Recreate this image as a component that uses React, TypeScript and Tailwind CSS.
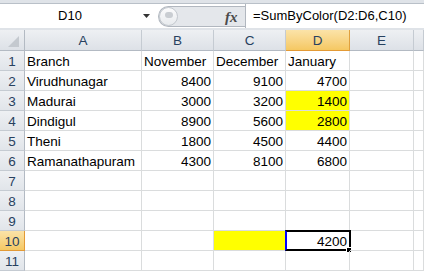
import React from "react"

const COLS = ["A", "B", "C", "D", "E", ""]

type Cell = { v?: string; num?: boolean; fill?: boolean; sel?: boolean }

const ROWS: Cell[][] = [
  [{ v: "Branch" }, { v: "November" }, { v: "December" }, { v: "January" }, {}, {}],
  [{ v: "Virudhunagar" }, { v: "8400", num: true }, { v: "9100", num: true }, { v: "4700", num: true }, {}, {}],
  [{ v: "Madurai" }, { v: "3000", num: true }, { v: "3200", num: true }, { v: "1400", num: true, fill: true }, {}, {}],
  [{ v: "Dindigul" }, { v: "8900", num: true }, { v: "5600", num: true }, { v: "2800", num: true, fill: true }, {}, {}],
  [{ v: "Theni" }, { v: "1800", num: true }, { v: "4500", num: true }, { v: "4400", num: true }, {}, {}],
  [{ v: "Ramanathapuram" }, { v: "4300", num: true }, { v: "8100", num: true }, { v: "6800", num: true }, {}, {}],
  [{}, {}, {}, {}, {}, {}],
  [{}, {}, {}, {}, {}, {}],
  [{}, {}, {}, {}, {}, {}],
  [{}, {}, { fill: true }, { v: "4200", num: true, sel: true }, {}, {}],
  [{}, {}, {}, {}, {}, {}],
]

const font = { fontFamily: '"Liberation Sans", Arial, sans-serif' }

export default function App() {
  return (
    <div className="w-[424px] h-[271px] overflow-hidden bg-white" style={font}>
      {/* top strip */}
      <div className="h-[4px] bg-[#dfe3e8] border-b border-[#b9c0c8]" />

      {/* formula bar */}
      <div className="h-[24px] flex items-stretch bg-white">
        <div className="w-[158px] flex items-center bg-white">
          <div className="w-[140px] text-center text-[13px] leading-[24px] text-black">D10</div>
          <svg width="8" height="5" viewBox="0 0 8 5" className="ml-[3px]">
            <path d="M0 0 L7 0 L3.5 4 Z" fill="#333" />
          </svg>
        </div>
        <div className="w-[87px] flex items-center">
          <div className="relative h-[21px] w-full rounded-l-full border border-r-0 border-[#b1b7bf] bg-[#e4e7eb] flex items-center">
            <div className="ml-[0px] w-[19px] h-[19px] rounded-full border border-[#c3c8ce] bg-gradient-to-b from-[#fbfbfc] to-[#e8ebee] flex justify-center">
              <div className="mt-[4px] w-[8px] h-[6px] rounded-full bg-[#c9cdd2]" />
            </div>
            <span
              className="absolute left-[66px] top-[1px] text-[15px] leading-[18px] italic font-bold text-[#4b4b4b]"
              style={{ fontFamily: '"Liberation Serif", "Times New Roman", serif' }}
            >
              fx
            </span>
          </div>
        </div>
        <div className="flex-1 border-l border-[#b1b7bf] pl-[7px] text-[13px] leading-[24px] text-black whitespace-nowrap">
          =SumByColor(D2:D6,C10)
        </div>
      </div>
      <div className="h-[2px] bg-[#dfe3e8]" />

      {/* grid */}
      <div className="grid grid-cols-[25px_117px_72px_72px_64px_64px_1fr]">
        {/* header row */}
        <div className="h-[21px] border-r border-b border-[#b3bac3] bg-gradient-to-b from-[#eef0f3] to-[#dde1e7] relative">
          <svg width="12" height="11" viewBox="0 0 12 11" className="absolute right-[4px] bottom-[3px]">
            <path d="M11 0 L11 11 L0 11 Z" fill="#c4c9cf" />
          </svg>
        </div>
        {COLS.map((c, i) => {
          const on = c === "D"
          return (
            <div
              key={i}
              className={`h-[21px] border-b text-center text-[13.5px] leading-[18px] pt-[2px] text-[#27415f] ${
                on
                  ? "bg-gradient-to-b from-[#fbe3a8] to-[#f5c862] border-r border-r-[#e0a03d] border-b-[#e39a36]"
                  : "bg-gradient-to-b from-[#eef0f3] to-[#dde1e7] border-r border-[#c5cbd2] border-b-[#b3bac3]"
              }`}
            >
              {c}
            </div>
          )
        })}

        {ROWS.map((row, r) => (
          <React.Fragment key={r}>
            <div
              className={`h-[20px] border-r border-b text-center text-[13.5px] leading-[14px] pt-[4px] text-[#27415f] ${
                r === 9
                  ? "bg-gradient-to-b from-[#fbe3a8] to-[#f5c862] border-[#e39a36]"
                  : "bg-gradient-to-b from-[#eef0f3] to-[#e1e5ea] border-r-[#b3bac3] border-b-[#c5cbd2]"
              }`}
            >
              {r + 1}
            </div>
            {row.map((cell, c) => (
              <div
                key={c}
                className={`relative h-[20px] border-r border-b border-[#dadcdd] text-[13.5px] leading-[14px] pt-[4px] text-black whitespace-nowrap ${
                  cell.num ? "text-right pr-[2px]" : "pl-[2px]"
                } ${cell.fill ? "bg-[#ffff00]" : ""}`}
              >
                {cell.v}
                {cell.sel && (
                  <>
                    <div className="absolute -left-[1px] -top-[1px] w-[66px] h-[21px] border-2 border-black border-l-[#0000ff]" />
                    <div className="absolute -right-[3px] -bottom-[3px] w-[6px] h-[6px] bg-black border border-white" />
                  </>
                )}
              </div>
            ))}
          </React.Fragment>
        ))}
      </div>
    </div>
  )
}
